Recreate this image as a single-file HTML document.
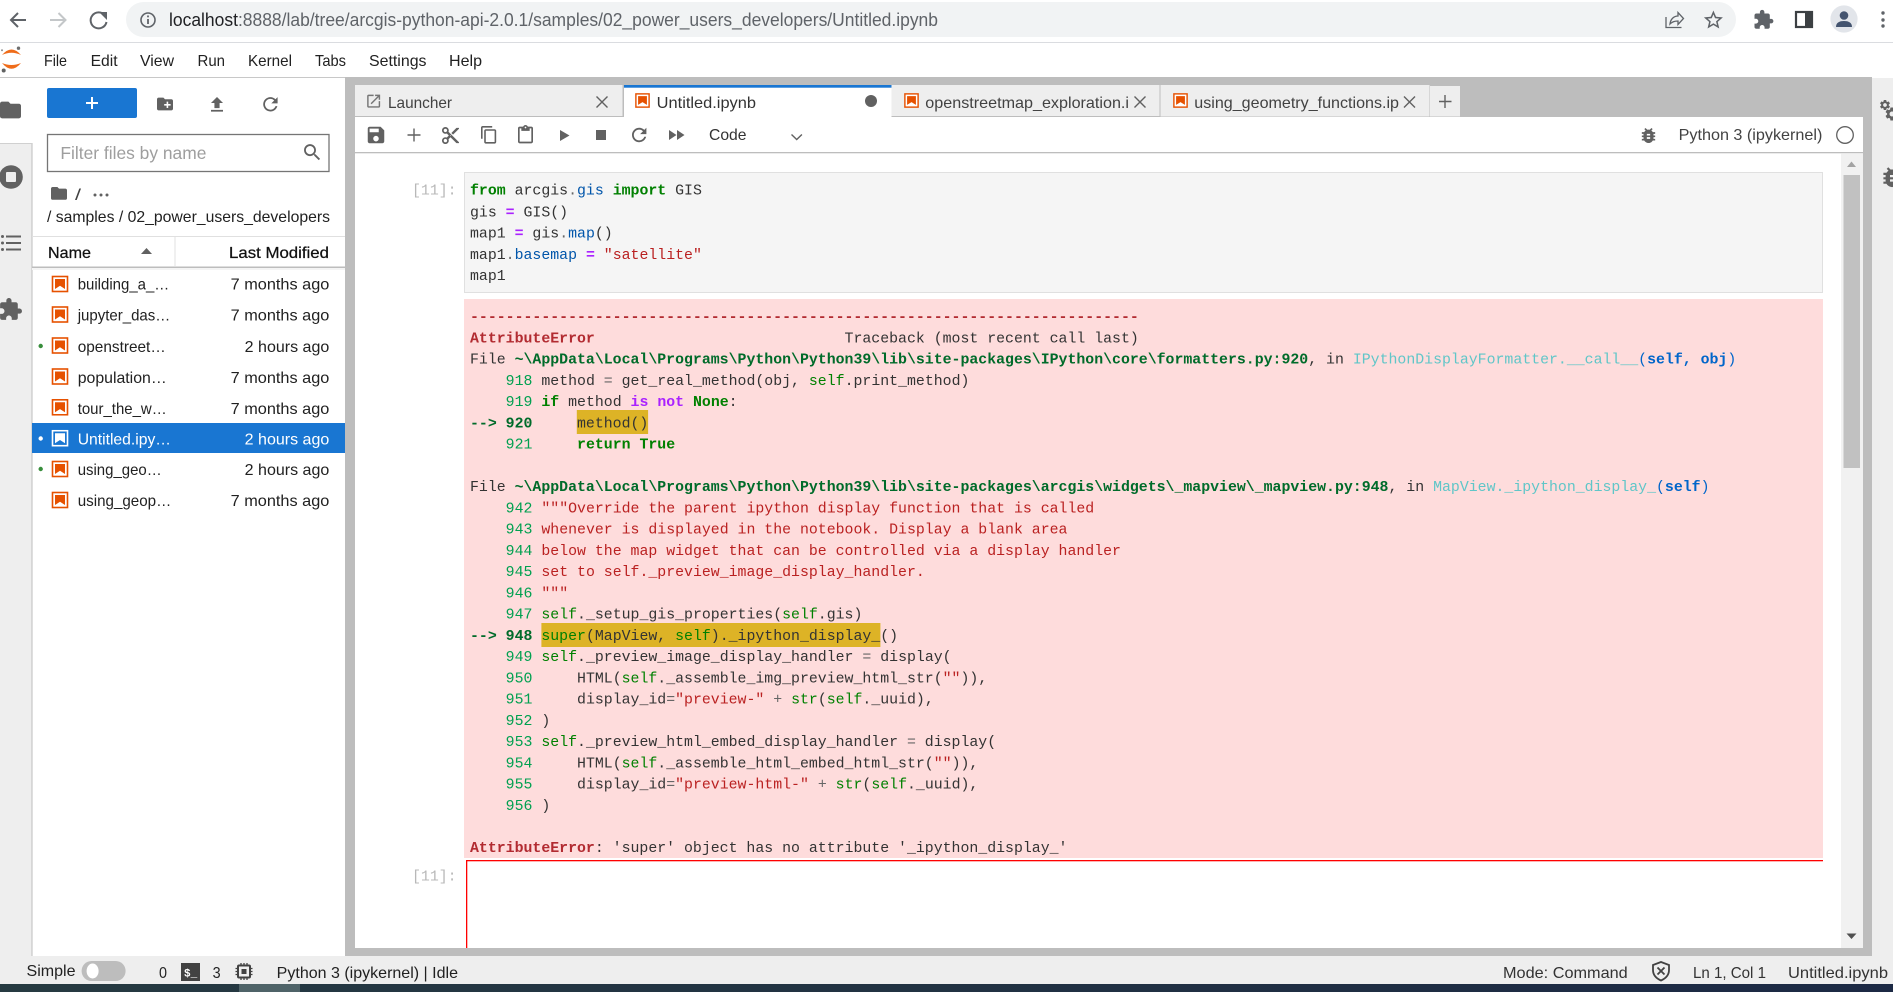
<!DOCTYPE html>
<html lang="en"><head><meta charset="utf-8"><title>JupyterLab</title>
<style>
html,body{margin:0;padding:0;background:#fff;width:1893px;height:992px;overflow:hidden}
svg{display:block}
text{white-space:pre}
.s{font-family:"Liberation Sans",sans-serif;font-size:16px;fill:#212121}
.m{font-family:"Liberation Mono",monospace;font-size:14.87px;fill:#333}
.pr{fill:#b8b8b8}
.b{font-weight:bold;fill:#006b2a}
.k{font-weight:bold;fill:#008000}
.p{font-weight:bold;fill:#aa22ff}
.n{fill:#00a050}
.o{fill:#666}
.f{fill:#008000}
.t{fill:#ba2121}
.u{fill:#0055aa}
.r{font-weight:bold;fill:#b22b31}
.c{fill:#60c6c8}
.l{fill:#0065ca}
.lb{font-weight:bold;fill:#0065ca}
</style></head><body>
<svg xmlns="http://www.w3.org/2000/svg" width="1893" height="992" viewBox="0 0 1893 992">
<defs>
<symbol id="save" viewBox="0 0 24 24"><path d="M17 3H5c-1.11 0-2 .9-2 2v14c0 1.1.89 2 2 2h14c1.1 0 2-.9 2-2V7l-4-4zm-5 16c-1.66 0-3-1.34-3-3s1.34-3 3-3 3 1.34 3 3-1.34 3-3 3zm3-10H5V5h10v4z"/></symbol>
<symbol id="cut" viewBox="0 0 24 24"><path d="M9.64 7.64c.23-.5.36-1.05.36-1.64 0-2.21-1.79-4-4-4S2 3.79 2 6s1.79 4 4 4c.59 0 1.14-.13 1.64-.36L10 12l-2.36 2.36C7.14 14.13 6.59 14 6 14c-2.21 0-4 1.79-4 4s1.79 4 4 4 4-1.79 4-4c0-.59-.13-1.14-.36-1.64L12 14l7 7h3v-1L9.64 7.64zM6 8c-1.1 0-2-.89-2-2s.9-2 2-2 2 .89 2 2-.9 2-2 2zm0 12c-1.1 0-2-.89-2-2s.9-2 2-2 2 .89 2 2-.9 2-2 2zm6-7.5c-.28 0-.5-.22-.5-.5s.22-.5.5-.5.5.22.5.5-.22.5-.5.5zM19 3l-6 6 2 2 7-7V3h-3z"/></symbol>
<symbol id="copy" viewBox="0 0 24 24"><path d="M16 1H4c-1.1 0-2 .9-2 2v14h2V3h12V1zm3 4H8c-1.1 0-2 .9-2 2v14c0 1.1.9 2 2 2h11c1.1 0 2-.9 2-2V7c0-1.1-.9-2-2-2zm0 16H8V7h11v14z"/></symbol>
<symbol id="paste" viewBox="0 0 24 24"><path d="M19 2h-4.18C14.4.84 13.3 0 12 0c-1.3 0-2.4.84-2.82 2H5c-1.1 0-2 .9-2 2v16c0 1.1.9 2 2 2h14c1.1 0 2-.9 2-2V4c0-1.1-.9-2-2-2zm-7 0c.55 0 1 .45 1 1s-.45 1-1 1-1-.45-1-1 .45-1 1-1zm7 18H5V4h2v3h10V4h2v16z"/></symbol>
<symbol id="refresh" viewBox="0 0 24 24"><path d="M17.65 6.35C16.2 4.9 14.21 4 12 4c-4.42 0-7.99 3.58-7.99 8s3.57 8 7.99 8c3.73 0 6.84-2.55 7.73-6h-2.08c-.82 2.33-3.04 4-5.65 4-3.31 0-6-2.69-6-6s2.69-6 6-6c1.66 0 3.14.69 4.22 1.78L13 11h7V4l-2.35 2.35z"/></symbol>
<symbol id="search" viewBox="0 0 24 24"><path d="M15.5 14h-.79l-.28-.27C15.41 12.59 16 11.11 16 9.5 16 5.91 13.09 3 9.5 3S3 5.91 3 9.5 5.91 16 9.5 16c1.61 0 3.09-.59 4.23-1.57l.27.28v.79l5 4.99L20.49 19l-4.99-5zm-6 0C7.01 14 5 11.99 5 9.5S7.01 5 9.5 5 14 7.01 14 9.5 11.99 14 9.5 14z"/></symbol>
<symbol id="folder" viewBox="0 0 24 24"><path d="M10 4H4c-1.1 0-1.99.9-1.99 2L2 18c0 1.1.9 2 2 2h16c1.1 0 2-.9 2-2V8c0-1.1-.9-2-2-2h-8l-2-2z"/></symbol>
<symbol id="newf" viewBox="0 0 24 24"><path d="M20 6h-8l-2-2H4c-1.11 0-1.99.89-1.99 2L2 18c0 1.11.89 2 2 2h16c1.11 0 2-.89 2-2V8c0-1.11-.89-2-2-2zm-1 8h-3v3h-2v-3h-3v-2h3V9h2v3h3v2z"/></symbol>
<symbol id="upload" viewBox="0 0 24 24"><path d="M9 16h6v-6h4l-7-7-7 7h4zm-4 2h14v2H5z"/></symbol>
<symbol id="ext" viewBox="0 0 24 24"><path d="M20.5 11H19V7c0-1.1-.9-2-2-2h-4V3.5C13 2.12 11.88 1 10.5 1S8 2.12 8 3.5V5H4c-1.1 0-1.99.9-1.99 2v3.8H3.5c1.49 0 2.7 1.21 2.7 2.7s-1.21 2.7-2.7 2.7H2V20c0 1.1.9 2 2 2h3.8v-1.5c0-1.49 1.21-2.7 2.7-2.7 1.49 0 2.7 1.21 2.7 2.7V22H17c1.1 0 2-.9 2-2v-4h1.5c1.38 0 2.5-1.12 2.5-2.5S21.88 11 20.5 11z"/></symbol>
<symbol id="bug" viewBox="0 0 24 24"><path d="M20 8h-2.81c-.45-.78-1.07-1.45-1.82-1.96L17 4.41 15.59 3l-2.17 2.17C12.96 5.06 12.49 5 12 5c-.49 0-.96.06-1.41.17L8.41 3 7 4.41l1.62 1.63C7.88 6.55 7.26 7.22 6.81 8H4v2h2.09c-.05.33-.09.66-.09 1v1H4v2h2v1c0 .34.04.67.09 1H4v2h2.81c1.04 1.79 2.97 3 5.19 3s4.15-1.21 5.19-3H20v-2h-2.09c.05-.33.09-.66.09-1v-1h2v-2h-2v-1c0-.34-.04-.67-.09-1H20V8zm-6 8h-4v-2h4v2zm0-4h-4v-2h4v2z"/></symbol>
<symbol id="star" viewBox="0 0 24 24"><path d="M22 9.24l-7.19-.62L12 2 9.19 8.63 2 9.24l5.46 4.73L5.82 21 12 17.27 18.18 21l-1.63-7.03L22 9.24zM12 15.4l-3.76 2.27 1-4.28-3.32-2.88 4.38-.38L12 6.1l1.71 4.04 4.38.38-3.32 2.88 1 4.28L12 15.4z"/></symbol>
<symbol id="launch" viewBox="0 0 24 24"><path d="M19 19H5V5h7V3H5c-1.11 0-2 .9-2 2v14c0 1.1.89 2 2 2h14c1.1 0 2-.9 2-2v-7h-2v7zM14 3v2h3.59l-9.83 9.83 1.41 1.41L19 6.41V10h2V3h-7z"/></symbol>
<symbol id="gear" viewBox="0 0 24 24"><path d="M19.14 12.94c.04-.3.06-.61.06-.94 0-.32-.02-.64-.07-.94l2.03-1.58c.18-.14.23-.41.12-.61l-1.92-3.32c-.12-.22-.37-.29-.59-.22l-2.39.96c-.5-.38-1.03-.7-1.62-.94l-.36-2.54c-.04-.24-.24-.41-.48-.41h-3.84c-.24 0-.43.17-.47.41l-.36 2.54c-.59.24-1.13.57-1.62.94l-2.39-.96c-.22-.08-.47 0-.59.22L2.74 8.87c-.12.21-.08.47.12.61l2.03 1.58c-.05.3-.09.63-.09.94s.02.64.07.94l-2.03 1.58c-.18.14-.23.41-.12.61l1.92 3.32c.12.22.37.29.59.22l2.39-.96c.5.38 1.03.7 1.62.94l.36 2.54c.05.24.24.41.48.41h3.84c.24 0 .44-.17.47-.41l.36-2.54c.59-.24 1.13-.56 1.62-.94l2.39.96c.22.08.47 0 .59-.22l1.92-3.32c.12-.22.07-.47-.12-.61l-2.01-1.58zM12 15.6c-1.98 0-3.6-1.62-3.6-3.6s1.62-3.6 3.6-3.6 3.6 1.62 3.6 3.6-1.62 3.6-3.6 3.6z"/></symbol>
<symbol id="nb" viewBox="0 0 17 17"><rect x="1" y="1" width="15" height="15" fill="#fff" stroke="#e65100" stroke-width="1.6"/><path d="M3.5 3.5h10v10l-5-3.2-5 3.2z" fill="#e65100"/></symbol>
<symbol id="nbw" viewBox="0 0 17 17"><rect x="1" y="1" width="15" height="15" fill="#1976d2" stroke="#fff" stroke-width="1.6"/><path d="M3.5 3.5h10v10l-5-3.2-5 3.2z" fill="#fff"/></symbol>
</defs>

<!-- browser chrome -->
<rect x="0" y="0" width="1893" height="42" fill="#fff"/>
<rect x="0" y="42" width="1893" height="1" fill="#dadce0"/>
<rect x="126" y="2" width="1610" height="35" rx="17.5" fill="#f1f3f4"/>
<g fill="none" stroke="#5f6368" stroke-width="2">
<path d="M26 20H11.5M18 13l-7 7 7 7"/>
<path d="M50 20H65M58.500 13l7 7-7 7" stroke="#c4c7c9"/>
<path d="M105 15.500A8 8 0 1 0 106.500 22"/>
</g>
<path d="M99 12h8v8z" fill="#5f6368"/>
<circle cx="148" cy="20" r="7" fill="none" stroke="#5f6368" stroke-width="1.6"/>
<rect x="147.100" y="19" width="1.800" height="5" fill="#5f6368"/><rect x="147.100" y="15.500" width="1.800" height="1.800" fill="#5f6368"/>
<text x="169" y="26" class="s" style="font-size:18px;fill:#5f6368" textLength="769" lengthAdjust="spacingAndGlyphs"><tspan fill="#202124" style="fill:#202124">localhost</tspan>:8888/lab/tree/arcgis-python-api-2.0.1/samples/02_power_users_developers/Untitled.ipynb</text>
<g fill="none" stroke="#5f6368" stroke-width="1.300"><path d="M1666 17v10.500h15.500"/><path d="M1670 24c.5-5 4-8 8-8v-3.500l5.500 6-5.500 6V21c-3 0-6 .8-8 3z"/></g>
<use href="#star" x="1702" y="8.600" width="22.800" height="22.800" fill="#5f6368"/>
<use href="#ext" x="1752.700" y="9" width="21.600" height="21.600" fill="#5f6368"/>
<rect x="1796" y="12" width="16" height="15" fill="#fff" stroke="#3c4043" stroke-width="2.200"/><rect x="1805" y="12" width="7" height="15" fill="#3c4043"/>
<circle cx="1844" cy="19" r="13.600" fill="#e2e5ea"/>
<circle cx="1844" cy="15.500" r="4.300" fill="#44546f"/><path d="M1836 27c0-4.500 3.500-6 8-6s8 1.500 8 6z" fill="#44546f"/>
<circle cx="1883" cy="13" r="1.700" fill="#5f6368"/><circle cx="1883" cy="20" r="1.700" fill="#5f6368"/><circle cx="1883" cy="26" r="1.700" fill="#5f6368"/>

<!-- menu bar -->
<path d="M2 55Q11.500 44 21 55Q11.500 50.500 2 55Z" fill="#ef6c1a"/>
<path d="M2 63Q11.500 74.500 21 63Q11.500 67 2 63Z" fill="#ef6c1a"/>
<circle cx="18.500" cy="48.200" r="1.700" fill="#6e6e6e"/><circle cx="3.700" cy="70.500" r="2" fill="#616262"/><circle cx="2" cy="50.300" r="1" fill="#8e8e8e"/>
<g class="menu">
<text x="44" y="66" class="s" textLength="23" lengthAdjust="spacingAndGlyphs">File</text>
<text x="90.600" y="66" class="s" textLength="27" lengthAdjust="spacingAndGlyphs">Edit</text>
<text x="140" y="66" class="s" textLength="34" lengthAdjust="spacingAndGlyphs">View</text>
<text x="197.500" y="66" class="s" textLength="27.500" lengthAdjust="spacingAndGlyphs">Run</text>
<text x="248" y="66" class="s" textLength="44" lengthAdjust="spacingAndGlyphs">Kernel</text>
<text x="315" y="66" class="s" textLength="31" lengthAdjust="spacingAndGlyphs">Tabs</text>
<text x="369" y="66" class="s" textLength="57.500" lengthAdjust="spacingAndGlyphs">Settings</text>
<text x="449" y="66" class="s" textLength="33" lengthAdjust="spacingAndGlyphs">Help</text>
</g>
<rect x="0" y="77" width="345" height="1" fill="#c8c8c8"/>

<!-- gray workspace frame -->
<rect x="345" y="77" width="1527" height="879" fill="#bdbdbd"/>
<rect x="1872" y="78" width="21" height="878" fill="#eee"/>
<rect x="355" y="117" width="1508" height="831" fill="#fff"/>

<!-- activity bar -->
<rect x="0" y="143" width="31.500" height="813" fill="#eee"/>
<rect x="31.500" y="143" width="1" height="813" fill="#bdbdbd"/>
<rect x="0" y="143" width="32" height="1" fill="#d0d0d0"/>
<use href="#folder" x="-2.100" y="97.400" width="25.200" height="25.200" fill="#616161"/>
<circle cx="11" cy="177" r="11.800" fill="#616161"/><rect x="6" y="172" width="10" height="10" rx="1" fill="#eee"/>
<g fill="#616161"><circle cx="2.500" cy="236.500" r="1.500"/><circle cx="2.500" cy="243" r="1.500"/><circle cx="2.500" cy="249.500" r="1.500"/><rect x="6" y="235.500" width="15" height="2"/><rect x="6" y="242" width="15" height="2"/><rect x="6" y="248.500" width="15" height="2"/></g>
<use href="#ext" x="-2" y="297" width="25" height="25" fill="#616161"/>

<!-- file browser -->
<rect x="47" y="88" width="90" height="30" rx="2" fill="#1976d2"/>
<path d="M92 97v12M86 103h12" stroke="#fff" stroke-width="2" fill="none"/>
<use href="#newf" x="155.400" y="94.400" width="19.200" height="19.200" fill="#616161"/>
<use href="#upload" x="206.700" y="94.400" width="20.600" height="20.600" fill="#616161"/>
<use href="#refresh" x="259.600" y="93.500" width="21.600" height="21.600" fill="#616161"/>
<rect x="47.500" y="134.500" width="281.500" height="37" fill="#fff" stroke="#757575" stroke-width="1.300"/>
<text x="60.400" y="159" class="s" style="font-size:17.500px;fill:#9e9e9e" textLength="146" lengthAdjust="spacingAndGlyphs">Filter files by name</text>
<use href="#search" x="301.300" y="141.400" width="22" height="22" fill="#616161"/>
<use href="#folder" x="49.400" y="183.800" width="19.200" height="19.200" fill="#616161"/>
<text x="75" y="200" class="s" style="fill:#424242" textLength="6" lengthAdjust="spacingAndGlyphs">/</text>
<circle cx="95" cy="195" r="1.500" fill="#616161"/><circle cx="101" cy="195" r="1.500" fill="#616161"/><circle cx="107" cy="195" r="1.500" fill="#616161"/>
<text x="47" y="222" class="s" textLength="283" lengthAdjust="spacingAndGlyphs">/ samples / 02_power_users_developers</text>
<rect x="32" y="236" width="313" height="1" fill="#e0e0e0"/>
<rect x="174.500" y="237" width="1" height="29" fill="#e0e0e0"/>
<rect x="32" y="266.500" width="313" height="1.500" fill="#bdbdbd"/>
<rect x="32" y="268" width="313" height="2" fill="#f4f4f4"/>
<text x="48" y="258" class="s" style="fill:#111;stroke:#111;stroke-width:.25" textLength="43" lengthAdjust="spacingAndGlyphs">Name</text>
<path d="M141 254l5.500-6 5.500 6z" fill="#616161"/>
<text x="229" y="258" class="s" style="fill:#111;stroke:#111;stroke-width:.25" textLength="100" lengthAdjust="spacingAndGlyphs">Last Modified</text>

<use href="#nb" x="51.500" y="275.500" width="17" height="17"/>
<use href="#nb" x="51.500" y="306" width="17" height="17"/>
<use href="#nb" x="51.500" y="337" width="17" height="17"/>
<use href="#nb" x="51.500" y="368" width="17" height="17"/>
<use href="#nb" x="51.500" y="398.800" width="17" height="17"/>
<rect x="32" y="423" width="313" height="30" fill="#1976d2"/>
<use href="#nbw" x="51.500" y="429.700" width="17" height="17"/>
<use href="#nb" x="51.500" y="460.500" width="17" height="17"/>
<use href="#nb" x="51.500" y="491.500" width="17" height="17"/>
<circle cx="40.700" cy="346" r="2.200" fill="#388e3c"/>
<circle cx="40.700" cy="438.500" r="2.200" fill="#fff"/>
<circle cx="40.700" cy="469" r="2.200" fill="#388e3c"/>

<text x="77.700" y="289.500" class="s" textLength="91.600" lengthAdjust="spacingAndGlyphs">building_a_…</text>
<text x="77.700" y="320.500" class="s" textLength="92.600" lengthAdjust="spacingAndGlyphs">jupyter_das…</text>
<text x="77.700" y="351.800" class="s" textLength="88" lengthAdjust="spacingAndGlyphs">openstreet…</text>
<text x="77.700" y="382.800" class="s" textLength="89" lengthAdjust="spacingAndGlyphs">population…</text>
<text x="77.700" y="413.800" class="s" textLength="89" lengthAdjust="spacingAndGlyphs">tour_the_w…</text>
<text x="77.700" y="444.500" class="s" style="fill:#fff" textLength="93.300" lengthAdjust="spacingAndGlyphs">Untitled.ipy…</text>
<text x="77.700" y="475.200" class="s" textLength="84" lengthAdjust="spacingAndGlyphs">using_geo…</text>
<text x="77.700" y="506" class="s" textLength="93.600" lengthAdjust="spacingAndGlyphs">using_geop…</text>

<text x="230.700" y="289.500" class="s" textLength="98.600" lengthAdjust="spacingAndGlyphs">7 months ago</text>
<text x="230.700" y="320.500" class="s" textLength="98.600" lengthAdjust="spacingAndGlyphs">7 months ago</text>
<text x="244.700" y="351.800" class="s" textLength="84.600" lengthAdjust="spacingAndGlyphs">2 hours ago</text>
<text x="230.700" y="382.800" class="s" textLength="98.600" lengthAdjust="spacingAndGlyphs">7 months ago</text>
<text x="230.700" y="413.800" class="s" textLength="98.600" lengthAdjust="spacingAndGlyphs">7 months ago</text>
<text x="244.700" y="444.500" class="s" style="fill:#fff" textLength="84.600" lengthAdjust="spacingAndGlyphs">2 hours ago</text>
<text x="244.700" y="475.200" class="s" textLength="84.600" lengthAdjust="spacingAndGlyphs">2 hours ago</text>
<text x="230.700" y="506" class="s" textLength="98.600" lengthAdjust="spacingAndGlyphs">7 months ago</text>

<!-- tabs -->
<rect x="355" y="85" width="267.500" height="31.500" fill="#eee"/>
<rect x="355" y="116" width="268" height="1" fill="#bdbdbd"/>
<use href="#launch" x="365" y="92.500" width="17.300" height="17.300" fill="#757575"/>
<text x="388" y="108" class="s" style="fill:#424242" textLength="64" lengthAdjust="spacingAndGlyphs">Launcher</text>
<path d="M596.500 96.500l11 11M607.500 96.500l-11 11" stroke="#616161" stroke-width="1.400" fill="none"/>

<rect x="624" y="85" width="267.500" height="32.500" fill="#fff"/>
<rect x="624" y="85" width="267.500" height="2.700" fill="#1976d2"/>
<use href="#nb" x="635" y="93" width="15" height="15"/>
<text x="656.700" y="108" class="s" style="fill:#333" textLength="99.300" lengthAdjust="spacingAndGlyphs">Untitled.ipynb</text>
<circle cx="871" cy="101" r="6" fill="#616161"/>

<rect x="891.500" y="85" width="268" height="31.500" fill="#eee"/>
<rect x="891.500" y="116" width="538" height="1" fill="#bdbdbd"/>
<rect x="1159.500" y="85" width="1" height="31" fill="#bdbdbd"/>
<use href="#nb" x="904" y="93" width="15" height="15"/>
<text x="925.300" y="108" class="s" style="fill:#424242" textLength="203.700" lengthAdjust="spacingAndGlyphs">openstreetmap_exploration.i</text>
<path d="M1134.500 96.500l11 11M1145.500 96.500l-11 11" stroke="#616161" stroke-width="1.400" fill="none"/>

<rect x="1160.500" y="85" width="269" height="31.500" fill="#eee"/>
<use href="#nb" x="1173" y="93" width="15" height="15"/>
<text x="1194.300" y="108" class="s" style="fill:#424242" textLength="204.700" lengthAdjust="spacingAndGlyphs">using_geometry_functions.ip</text>
<path d="M1404 96.500l11 11M1415 96.500l-11 11" stroke="#616161" stroke-width="1.400" fill="none"/>

<rect x="1430" y="86" width="30" height="30.500" fill="#eee"/>
<path d="M1445 95v13M1439 101.500h12.500" stroke="#616161" stroke-width="1.400" fill="none"/>

<!-- notebook toolbar -->
<rect x="355" y="152" width="1508" height="1.300" fill="#bdbdbd"/>
<use href="#save" x="365" y="124" width="22" height="22" fill="#616161"/>
<path d="M414 128.500v13M407.500 135h13" stroke="#616161" stroke-width="1.400" fill="none"/>
<use href="#cut" x="440.300" y="125.300" width="20.400" height="20.400" fill="#616161"/>
<use href="#copy" x="479.400" y="125.200" width="19.200" height="19.200" fill="#616161"/>
<use href="#paste" x="515.500" y="125" width="20" height="20" fill="#616161"/>
<path d="M560 130l9.500 5.500L560 141z" fill="#616161"/>
<rect x="596" y="130" width="10" height="10" fill="#616161"/>
<use href="#refresh" x="628.400" y="124.200" width="21.600" height="21.600" fill="#616161"/>
<path d="M669 130l7.500 5-7.500 5zM677 130l7.500 5-7.500 5z" fill="#616161"/>
<text x="709" y="140" class="s" style="fill:#333" textLength="37.500" lengthAdjust="spacingAndGlyphs">Code</text>
<path d="M791.500 134.500l5.200 5 5.200-5" stroke="#616161" stroke-width="1.400" fill="none"/>
<use href="#bug" x="1638.500" y="125.500" width="20" height="20" fill="#616161"/>
<text x="1678.600" y="140" class="s" style="fill:#424242" textLength="143.800" lengthAdjust="spacingAndGlyphs">Python 3 (ipykernel)</text>
<circle cx="1845" cy="135" r="8.300" fill="none" stroke="#616161" stroke-width="1.300"/>

<!-- right sidebar icons -->
<use href="#gear" x="1878.700" y="98.700" width="12.600" height="12.600" fill="#616161"/>
<use href="#gear" x="1883.800" y="105.800" width="16.400" height="16.400" fill="#616161"/>
<use href="#bug" x="1879" y="164" width="26.400" height="26.400" fill="#616161"/>

<!-- input cell -->
<text x="412" y="194.700" class="m pr">[11]:</text>
<rect x="464.500" y="172.500" width="1358" height="120" fill="#f5f5f5" stroke="#e0e0e0"/>
<text x="470" y="194.500" class="m"><tspan class="k">from</tspan> arcgis<tspan class="o">.</tspan><tspan class="u">gis</tspan> <tspan class="k">import</tspan> GIS</text>
<text x="470" y="216.300" class="m">gis <tspan class="p">=</tspan> GIS()</text>
<text x="470" y="237.500" class="m">map1 <tspan class="p">=</tspan> gis<tspan class="o">.</tspan><tspan class="u">map</tspan>()</text>
<text x="470" y="258.800" class="m">map1<tspan class="o">.</tspan><tspan class="u">basemap</tspan> <tspan class="p">=</tspan> <tspan class="t">"satellite"</tspan></text>
<text x="470" y="280" class="m">map1</text>

<!-- error output -->
<rect x="464" y="299" width="1359" height="559" fill="#fedcdc"/>
<rect x="576.800" y="410" width="71.300" height="24" fill="#ddb326"/>
<rect x="541.400" y="623" width="339" height="24" fill="#ddb326"/>
<g transform="translate(0,-1)">
<text x="470" y="322" class="m"><tspan class="r">---------------------------------------------------------------------------</tspan></text>
<text x="470" y="343.250" class="m"><tspan class="r">AttributeError</tspan>                            Traceback (most recent call last)</text>
<text x="470" y="364.500" class="m">File <tspan class="b">~\AppData\Local\Programs\Python\Python39\lib\site-packages\IPython\core\formatters.py:920</tspan>, in <tspan class="c">IPythonDisplayFormatter.__call__</tspan><tspan class="l">(</tspan><tspan class="lb">self, obj</tspan><tspan class="l">)</tspan></text>
<text x="470" y="385.750" class="m">    <tspan class="n">918</tspan> method <tspan class="o">=</tspan> get_real_method(obj, <tspan class="f">self</tspan>.print_method)</text>
<text x="470" y="407" class="m">    <tspan class="n">919</tspan> <tspan class="k">if</tspan> method <tspan class="p">is</tspan> <tspan class="p">not</tspan> <tspan class="k">None</tspan>:</text>
<text x="470" y="428.250" class="m"><tspan class="b">--&gt; 920</tspan>     method()</text>
<text x="470" y="449.500" class="m">    <tspan class="n">921</tspan>     <tspan class="k">return</tspan> <tspan class="k">True</tspan></text>
<text x="470" y="492" class="m">File <tspan class="b">~\AppData\Local\Programs\Python\Python39\lib\site-packages\arcgis\widgets\_mapview\_mapview.py:948</tspan>, in <tspan class="c">MapView._ipython_display_</tspan><tspan class="l">(</tspan><tspan class="lb">self</tspan><tspan class="l">)</tspan></text>
<text x="470" y="513.250" class="m">    <tspan class="n">942</tspan> <tspan class="t">"""Override the parent ipython display function that is called</tspan></text>
<text x="470" y="534.500" class="m">    <tspan class="n">943</tspan> <tspan class="t">whenever is displayed in the notebook. Display a blank area</tspan></text>
<text x="470" y="555.750" class="m">    <tspan class="n">944</tspan> <tspan class="t">below the map widget that can be controlled via a display handler</tspan></text>
<text x="470" y="577" class="m">    <tspan class="n">945</tspan> <tspan class="t">set to self._preview_image_display_handler.</tspan></text>
<text x="470" y="598.250" class="m">    <tspan class="n">946</tspan> <tspan class="t">"""</tspan></text>
<text x="470" y="619.500" class="m">    <tspan class="n">947</tspan> <tspan class="f">self</tspan>._setup_gis_properties(<tspan class="f">self</tspan>.gis)</text>
<text x="470" y="640.750" class="m"><tspan class="b">--&gt; 948</tspan> <tspan class="f">super</tspan>(MapView, <tspan class="f">self</tspan>)._ipython_display_()</text>
<text x="470" y="662" class="m">    <tspan class="n">949</tspan> <tspan class="f">self</tspan>._preview_image_display_handler <tspan class="o">=</tspan> display(</text>
<text x="470" y="683.250" class="m">    <tspan class="n">950</tspan>     HTML(<tspan class="f">self</tspan>._assemble_img_preview_html_str(<tspan class="t">""</tspan>)),</text>
<text x="470" y="704.500" class="m">    <tspan class="n">951</tspan>     display_id<tspan class="o">=</tspan><tspan class="t">"preview-"</tspan> <tspan class="o">+</tspan> <tspan class="f">str</tspan>(<tspan class="f">self</tspan>._uuid),</text>
<text x="470" y="725.750" class="m">    <tspan class="n">952</tspan> )</text>
<text x="470" y="747" class="m">    <tspan class="n">953</tspan> <tspan class="f">self</tspan>._preview_html_embed_display_handler <tspan class="o">=</tspan> display(</text>
<text x="470" y="768.250" class="m">    <tspan class="n">954</tspan>     HTML(<tspan class="f">self</tspan>._assemble_html_embed_html_str(<tspan class="t">""</tspan>)),</text>
<text x="470" y="789.500" class="m">    <tspan class="n">955</tspan>     display_id<tspan class="o">=</tspan><tspan class="t">"preview-html-"</tspan> <tspan class="o">+</tspan> <tspan class="f">str</tspan>(<tspan class="f">self</tspan>._uuid),</text>
<text x="470" y="810.750" class="m">    <tspan class="n">956</tspan> )</text>
<text x="470" y="853" class="m"><tspan class="r">AttributeError</tspan>: 'super' object has no attribute '_ipython_display_'</text>
</g>

<!-- active cell -->
<rect x="466" y="860" width="1357" height="1.300" fill="#f00"/>
<rect x="466" y="860" width="1.300" height="88" fill="#f00"/>
<text x="412" y="880.700" class="m pr">[11]:</text>

<!-- scrollbar -->
<rect x="1841" y="153.300" width="22" height="794.700" fill="#f1f1f1"/>
<rect x="1843.500" y="175" width="16.500" height="293" fill="#c1c1c1"/>
<path d="M1847 167l4.500-5.500 4.500 5.500z" fill="#a3a3a3"/>
<path d="M1846.500 933.500h10l-5 5.500z" fill="#505050"/>

<!-- status bar -->
<rect x="0" y="956" width="1893" height="28" fill="#eee"/>
<defs><linearGradient id="strip" x1="0" x2="1" y1="0" y2="0"><stop offset="0" stop-color="#263a41"/><stop offset="1" stop-color="#1c2944"/></linearGradient></defs>
<rect x="0" y="984" width="1893" height="8" fill="url(#strip)"/>
<rect x="239" y="984" width="61" height="8" fill="#4f6368"/>
<text x="26.500" y="976" class="s" textLength="49" lengthAdjust="spacingAndGlyphs">Simple</text>
<rect x="81.600" y="961" width="44" height="20" rx="10" fill="#bdbdbd"/>
<ellipse cx="92.600" cy="971" rx="6" ry="7.500" fill="#fff"/>
<text x="159" y="978" class="s" textLength="8" lengthAdjust="spacingAndGlyphs">0</text>
<rect x="181" y="963" width="19" height="18" fill="#424242"/>
<text x="184" y="976.500" style="font-family:'Liberation Mono',monospace;font-size:11px;font-weight:bold;fill:#fff">$_</text>
<text x="212.600" y="978" class="s" textLength="8" lengthAdjust="spacingAndGlyphs">3</text>
<rect x="238" y="965.500" width="12" height="12" rx="1" fill="none" stroke="#424242" stroke-width="2"/>
<rect x="241.500" y="969" width="5" height="5" fill="#424242"/>
<path d="M241 963v3M244 963v3M247 963v3M241 977v3M244 977v3M247 977v3M235.500 968.500h3M235.500 971.500h3M235.500 974.500h3M249.500 968.500h3M249.500 971.500h3M249.500 974.500h3" stroke="#424242" stroke-width="1.300" fill="none"/>
<text x="276.700" y="978" class="s" textLength="181.300" lengthAdjust="spacingAndGlyphs">Python 3 (ipykernel) | Idle</text>
<text x="1503" y="978" class="s" style="fill:#333" textLength="124.700" lengthAdjust="spacingAndGlyphs">Mode: Command</text>
<path d="M1661 962l8 3v5c0 5-3.500 8.500-8 10.500-4.500-2-8-5.500-8-10.500v-5z" fill="none" stroke="#424242" stroke-width="1.800"/>
<path d="M1657.500 967.500l7 7M1664.500 967.500l-7 7" stroke="#424242" stroke-width="1.800" fill="none"/>
<text x="1693" y="978" class="s" style="fill:#333" textLength="73" lengthAdjust="spacingAndGlyphs">Ln 1, Col 1</text>
<text x="1788" y="978" class="s" style="fill:#333" textLength="100" lengthAdjust="spacingAndGlyphs">Untitled.ipynb</text>
</svg>
</body></html>
